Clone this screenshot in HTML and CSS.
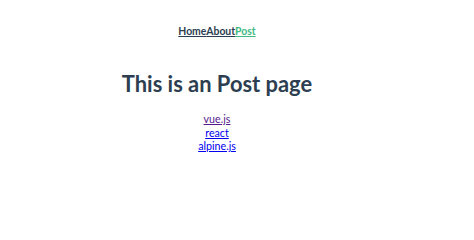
FILE: index.html
```html
<!DOCTYPE html>
<html lang="en">
<head>
<meta charset="utf-8">
<title>Post</title>
<link rel="stylesheet" href="styles.css">
</head>
<body>
<div class="app">
  <nav class="nav">
    <a class="nav-link" href="#home">Home</a><a class="nav-link" href="#about">About</a><a class="nav-link active" href="#post">Post</a>
  </nav>
  <div class="post">
    <h1 class="title">This is an Post page</h1>
    <ul class="links">
      <li><a class="ext visited" href="#vue">vue.js</a></li>
      <li><a class="ext" href="#react">react</a></li>
      <li><a class="ext" href="#alpine">alpine.js</a></li>
    </ul>
  </div>
</div>
</body>
</html>
```
FILE: styles.css
```css
html, body {
  margin: 0;
  padding: 0;
  background: #ffffff;
}
body {
  padding: 5px;
}
.app {
  width: 424px;
  font-family: Lato, "Liberation Sans", Arial, sans-serif;
  font-size: 10.7px;
  color: #2c3e50;
  text-align: center;
  -webkit-font-smoothing: antialiased;
}
.nav {
  padding: 20px;
  line-height: 13px;
  font-size: 10.4px;
}
.nav-link {
  font-weight: bold;
  color: #2c3e50;
  text-decoration: underline;
}
.nav-link.active {
  color: #42b983;
}
.title {
  font-size: 21.9px;
  font-weight: bold;
  margin: 13px 0 15px;
  line-height: 26px;
}
.links {
  list-style: none;
  margin: 0;
  padding: 0;
  line-height: 13.5px;
}
.ext {
  color: #0000ee;
  text-decoration: underline;
}
.ext.visited {
  color: #551a8b;
}
```
